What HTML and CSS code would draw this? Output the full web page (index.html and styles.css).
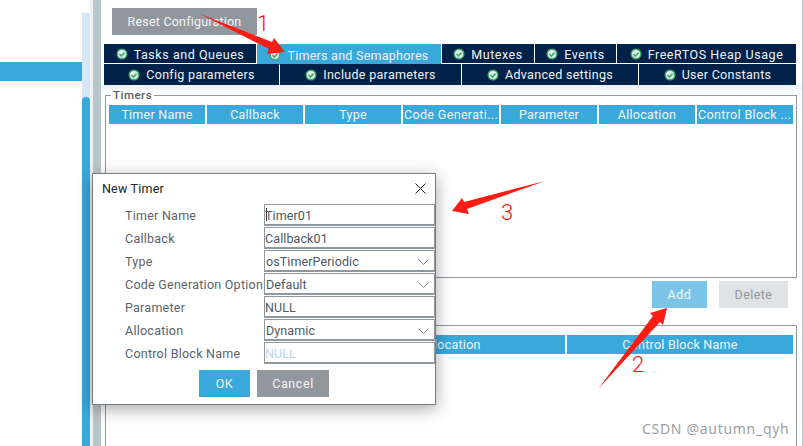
FILE: index.html
```html
<!DOCTYPE html>
<html lang="en">
<head>
<meta charset="utf-8">
<title>New Timer</title>
<link rel="stylesheet" href="styles.css">
</head>
<body>
<svg width="0" height="0" class="defs"><defs>
<symbol id="ok" viewBox="0 0 12 12"><circle cx="6" cy="6" r="5.5" fill="#3fa86f"/><circle cx="6" cy="6" r="4" fill="#e4f3ea"/><path d="M3.4 6l2 2 3.2-3.4" fill="none" stroke="#3fa86f" stroke-width="1.6"/></symbol>
</defs></svg>
<div class="app">
  <aside class="tree"><div class="tree-row"></div></aside>
  <div class="scroll"><div class="thumb"></div></div>
  <div class="split"><div class="split-bar"></div></div>
  <main class="main">
    <div class="top"><button class="btn btn-gray btn-reset">Reset Configuration</button></div>
    <div class="tabs">
      <div class="tab-row">
        <div class="tab w152"><svg class="ok"><use href="#ok"/></svg>Tasks and Queues</div>
        <div class="tab sel w184"><svg class="ok"><use href="#ok"/></svg>Timers and Semaphores</div>
        <div class="tab w92"><svg class="ok"><use href="#ok"/></svg>Mutexes</div>
        <div class="tab w81"><svg class="ok"><use href="#ok"/></svg>Events</div>
        <div class="tab grow"><svg class="ok"><use href="#ok"/></svg>FreeRTOS Heap Usage</div>
      </div>
      <div class="tab-row row2">
        <div class="tab w175"><svg class="ok"><use href="#ok"/></svg>Config parameters</div>
        <div class="tab w181"><svg class="ok"><use href="#ok"/></svg>Include parameters</div>
        <div class="tab w176"><svg class="ok"><use href="#ok"/></svg>Advanced settings</div>
        <div class="tab grow"><svg class="ok"><use href="#ok"/></svg>User Constants</div>
      </div>
    </div>
    <div class="strip"></div>
    <section class="box box-timers">
      <span class="legend">Timers</span>
      <div class="thead t7">
        <div>Timer Name</div><div>Callback</div><div>Type</div><div class="tight">Code Generati...</div><div>Parameter</div><div>Allocation</div><div class="tight">Control Block ...</div>
      </div>
    </section>
    <div class="actions">
      <button class="btn btn-add">Add</button>
      <button class="btn btn-del">Delete</button>
    </div>
    <section class="box box-sem">
      <div class="thead t3"><div></div><div>Allocation</div><div>Control Block Name</div></div>
    </section>
  </main>
</div>

<div class="dialog">
  <div class="dlg-title"><span>New Timer</span>
    <svg class="close" viewBox="0 0 11 11"><path d="M.5.5l10 10M10.5.5l-10 10" stroke="#222" fill="none"/></svg>
  </div>
  <div class="form">
    <label>Timer Name</label><div class="field"><i class="caret"></i>Timer01</div>
    <label>Callback</label><div class="field">Callback01</div>
    <label>Type</label><div class="field combo">osTimerPeriodic<svg class="chev" viewBox="0 0 11 6"><path d="M.5.5l5 5 5-5" fill="none" stroke="#888"/></svg></div>
    <label>Code Generation Option</label><div class="field combo">Default<svg class="chev" viewBox="0 0 11 6"><path d="M.5.5l5 5 5-5" fill="none" stroke="#888"/></svg></div>
    <label>Parameter</label><div class="field">NULL</div>
    <label>Allocation</label><div class="field combo">Dynamic<svg class="chev" viewBox="0 0 11 6"><path d="M.5.5l5 5 5-5" fill="none" stroke="#888"/></svg></div>
    <label>Control Block Name</label><div class="field off">NULL</div>
  </div>
  <div class="dlg-btns">
    <button class="btn btn-ok">OK</button>
    <button class="btn btn-gray btn-cancel">Cancel</button>
  </div>
</div>

<svg class="arrows" viewBox="0 0 803 446">
  <polygon points="200,14 272,42 274,38 285,52 267,54 269,49" fill="#fb1c14"/>
  <polygon points="598,389 653,316 650,313 667,308 663,325 660,322" fill="#fb1c14"/>
  <polygon points="545,181 464,202 462,198 452,211 469,214 467,209" fill="#fb1c14"/>
</svg>
<span class="num n1">1</span>
<span class="num n2">2</span>
<span class="num n3">3</span>
<span class="mark">CSDN @autumn_qyh</span>
</body>
</html>
```
FILE: styles.css
```css
* { box-sizing: border-box; }
html, body { margin: 0; padding: 0; }
body { width: 803px; height: 446px; overflow: hidden; background: #fff; position: relative; font-family: Roboto, "Liberation Sans", sans-serif; }
.defs { position: absolute; }
.app { display: flex; height: 446px; }
.tree { width: 82px; padding-top: 62px; background: #fff; }
.tree-row { height: 19px; background: #39a9dc; }
.scroll { width: 8px; margin-top: 13px; background: #d6e6f4; display: flex; flex-direction: column; justify-content: flex-end; }
.thumb { height: 349px; background: #39a9dc; border-radius: 4px 4px 0 0; }
.split { width: 11px; padding-left: 3px; background: #eef1f4; }
.split-bar { width: 8px; height: 100%; background: #b9c5cc; }
.main { flex: 1; min-width: 0; position: relative; border-right: 1px solid #c0c8ce; }
.top { height: 44px; padding: 8px 0 0 11px; }
.btn { border: 0; padding: 0; font-family: inherit; font-size: 12.5px; letter-spacing: .6px; color: #f4f6f7; display: block; }
.btn-gray { background: #90979d; }
.btn-reset { width: 145px; height: 27px; letter-spacing: .2px; }
.tabs { margin-left: 3px; width: 692px; }
.tab-row { display: flex; gap: 1px; height: 20px; }
.row2 { height: 21px; }
.tab { background: #022249; color: #f0f2f5; font-size: 12.5px; letter-spacing: .55px; display: flex; align-items: center; justify-content: center; white-space: nowrap; height: 19px; padding-top: 1px; }
.row2 .tab { height: 21px; padding-top: 0; letter-spacing: .3px; }
.tab.sel { background: #39a9dc; height: 21px; letter-spacing: .25px; }
.ok { width: 12px; height: 12px; margin-right: 6px; flex: none; }
.w152 { width: 152px; }
.w184 { width: 184px; }
.w92 { width: 92px; }
.w81 { width: 81px; }
.w175 { width: 175px; }
.w181 { width: 181px; }
.w176 { width: 176px; }
.grow { flex: 1; }
.strip { height: 5px; background: #f1f4f6; }
.box { border: 1px solid #90979d; margin-left: 4px; width: 692px; position: relative; padding: 9px 3px 0; }
.box-timers { height: 183px; margin-top: 5px; }
.legend { position: absolute; left: 5px; top: -7px; padding: 0 2px; background: #fff; font-size: 11.5px; font-weight: 500; letter-spacing: .5px; color: #555d64; line-height: 12px; }
.thead { display: grid; gap: 2px; height: 19px; }
.t7 { grid-template-columns: repeat(7, 96px); }
.t3 { grid-template-columns: 227px 227px 226px; }
.thead div { background: #39a9dc; color: #f4f6f7; font-size: 12.5px; letter-spacing: .25px; display: flex; align-items: center; justify-content: center; white-space: nowrap; overflow: hidden; }
.thead .tight { letter-spacing: .35px; justify-content: flex-start; padding-left: 1px; }
.actions { display: flex; height: 27px; margin: 3px 0 0 551px; gap: 12px; }
.btn-add { width: 55px; background: #7cc5e9; }
.btn-del { width: 69px; background: #dfe3e6; color: #90979d; letter-spacing: .45px; }
.box-sem { margin-top: 17px; height: 130px; }
.dialog { position: absolute; left: 92px; top: 173px; width: 344px; height: 232px; background: #fff; border: 1px solid #777d82; box-shadow: 0 4px 16px rgba(0,0,0,.35); padding: 0 0 0 32px; }
.dlg-title { height: 30px; margin-left: -23px; padding-bottom: 2px; display: flex; align-items: center; justify-content: space-between; padding-right: 9px; font-size: 12.5px; letter-spacing: .2px; color: #222; }
.close { width: 11px; height: 11px; }
.form { display: grid; grid-template-columns: 139px 171px; grid-auto-rows: 22px; row-gap: 1px; }
.form label { font-size: 12.5px; letter-spacing: .25px; color: #5b6269; display: flex; align-items: center; white-space: nowrap; }
.field { border: 1px solid #90979d; border-bottom-width: 2px; font-size: 12.5px; letter-spacing: .1px; color: #50575e; display: flex; align-items: center; padding-top: 1px; position: relative; white-space: nowrap; }
.combo { padding-left: 1px; }
.off { color: #bcd4ee; }
.caret { position: absolute; left: 1px; top: 3px; bottom: 3px; width: 1px; background: #333; }
.chev { position: absolute; right: 5px; top: 8px; width: 11px; height: 6px; }
.dlg-btns { display: flex; gap: 7px; margin: 6px 0 0 74px; }
.btn-ok { width: 51px; height: 27px; background: #39a9dc; }
.btn-cancel { width: 72px; height: 27px; }
.arrows { position: absolute; left: 0; top: 0; width: 803px; height: 446px; pointer-events: none; }
.num { position: absolute; font-family: Roboto, "Liberation Sans", sans-serif; font-weight: 300; font-size: 22px; line-height: 22px; color: #f5140f; }
.n1 { left: 257px; top: 13px; }
.n2 { left: 632px; top: 354px; }
.n3 { left: 501px; top: 202px; }
.mark { position: absolute; left: 642px; top: 420px; font-family: "Noto Sans", sans-serif; font-size: 14px; line-height: 18px; letter-spacing: .7px; color: #a0a0a0; white-space: nowrap; }
```
